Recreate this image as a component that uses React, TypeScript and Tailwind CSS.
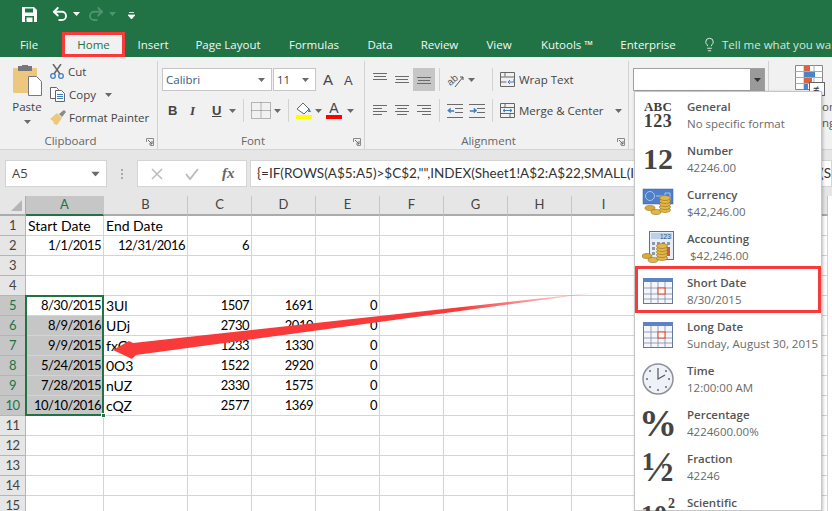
import { Lightbulb, Redo2, Undo2 } from "lucide-react";
import type { ReactNode } from "react";

const tabs = [
  { label: "File", w: "w-[58px]" },
  { label: "Home", w: "w-[63px]", active: true },
  { label: "Insert", w: "w-[56px]" },
  { label: "Page Layout", w: "w-[94px]" },
  { label: "Formulas", w: "w-[78px]" },
  { label: "Data", w: "w-[54px]" },
  { label: "Review", w: "w-[65px]" },
  { label: "View", w: "w-[54px]" },
  { label: "Kutools ™", w: "w-[82px]" },
  { label: "Enterprise", w: "w-[80px]" },
];

const columns = ["A", "B", "C", "D", "E", "F", "G", "H", "I", "J", "K", "L"];

// row number -> cells A..E, a leading "<" means left aligned
const sheet: Record<number, string[]> = {
  1: ["<Start Date", "<End Date", "", "", ""],
  2: ["1/1/2015", "12/31/2016", "6", "", ""],
  5: ["8/30/2015", "<3Ul", "1507", "1691", "0"],
  6: ["8/9/2016", "<UDj", "2730", "2010", "0"],
  7: ["9/9/2015", "<fxG", "1233", "1330", "0"],
  8: ["5/24/2015", "<0O3", "1522", "2920", "0"],
  9: ["7/28/2015", "<nUZ", "2330", "1575", "0"],
  10: ["10/10/2016", "<cQZ", "2577", "1369", "0"],
};

function Caret({ className = "" }: { className?: string }) {
  return (
    <svg width="7" height="4" viewBox="0 0 7 4" className={className}>
      <path d="M0 0h7L3.5 4z" fill="#6a6a6a" />
    </svg>
  );
}

function Divider({ className = "" }: { className?: string }) {
  return <div className={`w-px h-[23px] bg-[#d2d2d2] ${className}`} />;
}

function AlignLines({ kind }: { kind: "top" | "middle" | "bottom" | "left" | "center" | "right" }) {
  const sets = {
    top: [[0, 14, 2], [1, 13, 5], [0, 14, 8]],
    middle: [[0, 14, 5], [1, 13, 8], [0, 14, 11]],
    bottom: [[0, 14, 9], [1, 13, 12], [0, 14, 15]],
    left: [[0, 14, 3], [0, 9, 6], [0, 14, 9], [0, 9, 12]],
    center: [[0, 14, 3], [2, 12, 6], [0, 14, 9], [2, 12, 12]],
    right: [[0, 14, 3], [5, 14, 6], [0, 14, 9], [5, 14, 12]],
  }[kind];
  return (
    <svg width="14" height="17" viewBox="0 0 14 17">
      {sets.map(([a, b, y], i) => (
        <path key={i} d={`M${a} ${y + 0.5}H${b}`} stroke="#6b6b6b" />
      ))}
    </svg>
  );
}

function Indent({ flip }: { flip?: boolean }) {
  return (
    <svg width="16" height="16" viewBox="0 0 16 16">
      <path d="M0 1.5h16M8 5.5h8M8 9.5h8M0 14.5h16" stroke="#6b6b6b" />
      <path
        d={flip ? "M1 7.5h4V5l3 2.5L5 10V8.5H1z" : "M7 7.5H3.500V5L0.500 7.500 3.500 10V8.500H7z"}
        fill="#3f7fbf"
        stroke="#3f7fbf"
        strokeWidth=".5"
      />
    </svg>
  );
}

function Group({ width, label, launcher, children }: { width: string; label: string; launcher?: boolean; children: ReactNode }) {
  return (
    <div className={`${width} shrink-0 h-[88px] mt-[4px] border-r border-[#d2d2d2] flex flex-col relative`}>
      <div className="h-[61px] pt-[7px]">{children}</div>
      <div className="h-[14px] mt-[12px] pr-[16px] flex items-center justify-center leading-[14px] text-[#666]">{label}</div>
      {launcher && (
        <svg width="8" height="8" viewBox="0 0 8 8" className="absolute right-[3px] bottom-[3px]">
          <path d="M.5 4V.5H7.500V7.500H4" fill="none" stroke="#8a8a8a" />
          <path d="M2 2l4 4M6 3v3H3" fill="none" stroke="#6a6a6a" />
        </svg>
      )}
    </div>
  );
}

function Coins({ x = 0, y = 0 }: { x?: number; y?: number }) {
  const stacks = [
    [16, 13], [16, 10], [16, 7], [16, 4], [16, 1],
  ];
  return (
    <g transform={`translate(${x} ${y})`}>
      <ellipse cx="5" cy="11" rx="5" ry="2.500" fill="#d9a93a" stroke="#96711a" strokeWidth=".6" />
      <ellipse cx="11" cy="15" rx="5" ry="2.500" fill="#e2b64a" stroke="#96711a" strokeWidth=".6" />
      {stacks.map(([cx, cy], i) => (
        <ellipse key={i} cx={cx + 4} cy={cy} rx="5.500" ry="2.500" fill="#e2b64a" stroke="#96711a" strokeWidth=".6" />
      ))}
    </g>
  );
}

function CalendarIcon() {
  return (
    <svg width="30" height="27" viewBox="0 0 30 27">
      <rect x=".5" y=".5" width="29" height="25" fill="#f4f6fb" stroke="#66789a" />
      <rect x="0" y="0" width="30" height="4" fill="#5c83c4" />
      <path d="M.5 10h29M.5 16h29M.5 21h29M8 4v22M15 4v22M22 4v22" stroke="#7d8aa5" strokeWidth=".8" />
      <rect x="15" y="10" width="7" height="6" fill="#fff" stroke="#e2421f" />
    </svg>
  );
}

function MenuIcon({ kind }: { kind: string }) {
  if (kind === "General") {
    return (
      <div className="flex flex-col items-center text-[#3f3f3f] font-['Liberation_Serif',serif] font-bold">
        <span className="text-[13px] leading-[13px] tracking-[0.2px]">ABC</span>
        <span className="text-[18px] leading-[17px] tracking-[0.5px]">123</span>
      </div>
    );
  }
  if (kind === "Number") {
    return <span className="text-[30px] leading-[30px] text-[#444] font-bold font-['Liberation_Serif',serif]">12</span>;
  }
  if (kind === "Currency") {
    return (
      <svg width="32" height="30" viewBox="0 0 32 30">
        <rect x="1" y="1" width="30" height="15" fill="#4f7fc9" stroke="#3a5f9e" strokeWidth=".5" />
        <circle cx="8" cy="8" r="4.500" fill="none" stroke="#a9c6ee" />
        <path d="M14 8h8M23 5h5v7h-5z" stroke="#a9c6ee" fill="none" />
        <Coins x="3" y="9" />
      </svg>
    );
  }
  if (kind === "Accounting") {
    return (
      <svg width="33" height="33" viewBox="0 0 33 33">
        <rect x="7.500" y=".5" width="24" height="28" fill="#e8eef7" stroke="#4f74ab" />
        <rect x="9" y="2" width="21" height="6" fill="#bcd0ec" />
        <text x="18" y="7.500" fontSize="6.500" fontFamily="Liberation Sans" fill="#30507f">123</text>
        <path d="M10 11h3v3h-3zM15 11h3v3h-3zM20 11h3v3h-3zM25 11h3v3h-3zM10 16h3v3h-3zM10 21h3v3h-3z" fill="#8d99a8" />
        <rect x="25" y="16" width="3" height="9" fill="#c4603c" />
        <Coins x="0" y="14" />
      </svg>
    );
  }
  if (kind === "Short Date" || kind === "Long Date") return <CalendarIcon />;
  if (kind === "Time") {
    return (
      <svg width="32" height="32" viewBox="0 0 32 32">
        <circle cx="16" cy="16" r="15" fill="#eef2f8" stroke="#8c9199" strokeWidth="1.500" />
        <path d="M16 5v11l7-4" fill="none" stroke="#555" strokeWidth="1.200" />
        {[[16, 27], [27, 16], [5, 16], [24, 24], [8, 24], [8, 8], [24, 8]].map(([cx, cy], i) => (
          <circle key={i} cx={cx} cy={cy} r="1" fill="#666" />
        ))}
      </svg>
    );
  }
  if (kind === "Percentage") {
    return <span className="text-[38px] leading-[34px] text-[#444] font-bold font-['Liberation_Serif',serif]">%</span>;
  }
  if (kind === "Fraction") {
    return <span className="text-[42px] leading-[36px] text-[#444] font-bold font-['Liberation_Serif',serif]">½</span>;
  }
  return (
    <span className="text-[26px] leading-[30px] mt-[8px] text-[#444] font-bold font-['Liberation_Serif',serif] relative pr-[8px]">
      10
      <span className="absolute right-0 -top-[3px] text-[14px] leading-[14px]">2</span>
    </span>
  );
}

const menu = [
  { title: "General", sub: "No specific format" },
  { title: "Number", sub: "42246.00" },
  { title: "Currency", sub: "$42,246.00" },
  { title: "Accounting", sub: "\u00a0$42,246.00" },
  { title: "Short Date", sub: "8/30/2015" },
  { title: "Long Date", sub: "Sunday, August 30, 2015" },
  { title: "Time", sub: "12:00:00 AM" },
  { title: "Percentage", sub: "4224600.00%" },
  { title: "Fraction", sub: "42246" },
  { title: "Scientific", sub: "\u00a0" },
];

export default function App() {
  return (
    <div className="relative w-[832px] h-[511px] overflow-hidden bg-white font-['Open_Sans',sans-serif]">
      {/* Title bar */}
      <div className="h-[32px] bg-[#217346] flex items-center pl-[22px]">
        <svg width="15" height="15" viewBox="0 0 15 15" className="mb-[4px]">
          <path d="M0 0h12l3 3v12H0z" fill="#fff" />
          <path d="M3 1.500h8v4H3z" fill="#217346" />
          <path d="M3 9h9v6H3z" fill="#217346" />
          <path d="M4.500 10.500h6v4.500h-6z" fill="#fff" />
        </svg>
        <Undo2 size={18} strokeWidth={2.5} color="#fff" className="ml-[14px] mb-[5px]" />
        <Caret className="ml-[4px] mb-[4px] [&>path]:fill-white" />
        <Redo2 size={18} strokeWidth={2.5} color="#4f9470" className="ml-[7px] mb-[5px]" />
        <Caret className="ml-[4px] mb-[4px] [&>path]:fill-[#4f9470]" />
        <svg width="7" height="8" viewBox="0 0 7 8" className="ml-[12px] mb-[0px]">
          <path d="M1 .5h5M0 3h7L3.500 7z" stroke="#fff" fill="#fff" strokeWidth=".8" />
        </svg>
      </div>

      {/* Tabs */}
      <div className="h-[25px] bg-[#217346] flex items-center text-[11.5px] text-white">
        {tabs.map((t) => (
          <div
            key={t.label}
            className={`${t.w} h-[25px] shrink-0 flex items-center justify-center ${
              t.active ? "bg-[#f1f1f1] text-[#217346] border-[3px] border-[#f93a3a] ml-[4px]" : "opacity-95"
            }`}
          >
            {t.label}
          </div>
        ))}
        <Lightbulb size={15} strokeWidth={1.5} className="ml-[14px] shrink-0 text-[#e3efe8]" />
        <span className="ml-[5px] whitespace-nowrap text-[#d5e6dc]">Tell me what you want</span>
      </div>

      {/* Ribbon */}
      <div className="h-[93px] bg-[#f1f1f1] border-b border-[#d4d4d4] flex text-[11.5px] text-[#444]">
        <Group width="w-[158px]" label="Clipboard" launcher>
          <div className="flex h-[61px]">
            <div className="w-[50px] -mt-[3px] flex flex-col items-center pl-[4px]">
              <svg width="29" height="31" viewBox="0 0 29 31">
                <rect x="0" y="3" width="24" height="25" rx="1" fill="#eec77f" />
                <rect x="5" y="1" width="14" height="5" fill="#777" />
                <rect x="9" y="0" width="6" height="3" fill="#777" />
                <path d="M15.500 11.500h8l5 5v14h-13z" fill="#fff" stroke="#777" />
              </svg>
              <span className="mt-[3px] leading-[16px]">Paste</span>
              <Caret className="mt-[5px]" />
            </div>
            <div className="-mt-[8px] flex flex-col">
              <div className="h-[23px] flex items-center">
                <svg width="14" height="15" viewBox="0 0 14 15">
                  <path d="M3 0l7 10M11 0L4 10" stroke="#666" strokeWidth="1.500" />
                  <circle cx="3" cy="12" r="2.300" fill="none" stroke="#3f7fbf" strokeWidth="1.300" />
                  <circle cx="11" cy="12" r="2.300" fill="none" stroke="#3f7fbf" strokeWidth="1.300" />
                </svg>
                <span className="ml-[4px]">Cut</span>
              </div>
              <div className="h-[23px] flex items-center">
                <svg width="15" height="15" viewBox="0 0 15 15">
                  <path d="M.5.5h6l2 2v9H.5z" fill="#fff" stroke="#666" />
                  <path d="M5.500 3.500h6l3 3v8h-9z" fill="#fff" stroke="#666" />
                  <path d="M7 7.500h6M7 9.500h6M7 11.500h6" stroke="#3f7fbf" />
                </svg>
                <span className="ml-[4px]">Copy</span>
                <Caret className="ml-[9px]" />
              </div>
              <div className="h-[23px] flex items-center">
                <svg width="16" height="15" viewBox="0 0 16 15">
                  <path d="M0 9l7-6 5 5-5 7-3-1-1-3z" fill="#eec77f" />
                  <path d="M9 4l5-4 2 2-4 5z" fill="#8a8a8a" />
                </svg>
                <span className="ml-[3px] whitespace-nowrap">Format Painter</span>
              </div>
            </div>
          </div>
        </Group>

        <Group width="w-[207px]" label="Font" launcher>
          <div className="pl-[4px] flex h-[23px]">
            <div className="w-[110px] h-[23px] bg-white border border-[#c6c6c6] flex items-center justify-between px-[3px] pr-[6px]">
              <span className="text-[#3c5a82]">Calibri</span>
              <Caret />
            </div>
            <div className="w-[43px] h-[23px] ml-px bg-white border border-[#c6c6c6] flex items-center justify-between px-[3px] pr-[6px]">
              <span>11</span>
              <Caret />
            </div>
            <span className="ml-[7px] text-[15px] leading-[23px] font-['Liberation_Sans',sans-serif]">A</span>
            <span className="ml-[11px] text-[13px] leading-[25px] font-['Liberation_Sans',sans-serif]">A</span>
          </div>
          <div className="flex items-center h-[23px] mt-[8px] pl-[10px]">
            <span className="w-[22px] font-bold text-[13px] font-['Liberation_Sans',sans-serif]">B</span>
            <span className="w-[22px] italic text-[13px] font-['Liberation_Serif',serif] font-bold">I</span>
            <span className="w-[14px] underline font-bold text-[13px] font-['Liberation_Sans',sans-serif]">U</span>
            <Caret className="ml-[3px]" />
            <Divider className="ml-[7px]" />
            <svg width="20" height="17" viewBox="0 0 20 17" className="ml-[7px]">
              <path d="M.5.5h19v16H.5zM.5 8.500h19M10 .5v16" fill="none" stroke="#777" strokeDasharray="1 1" />
            </svg>
            <Caret className="ml-[3px]" />
            <Divider className="ml-[7px]" />
            <div className="ml-[7px] flex flex-col items-center">
              <svg width="16" height="13" viewBox="0 0 16 13">
                <path d="M1 7l6-6 6 6-5 5z" fill="#fff" stroke="#666" />
                <path d="M13 6l2 4h-3z" fill="#3f7fbf" />
              </svg>
              <div className="w-[16px] h-[4px] bg-[#ffff00]" />
            </div>
            <Caret className="ml-[3px]" />
            <div className="ml-[4px] flex flex-col items-center">
              <span className="text-[14px] leading-[13px] font-['Liberation_Sans',sans-serif]">A</span>
              <div className="w-[16px] h-[4px] bg-[#ff0000]" />
            </div>
            <Caret className="ml-[5px]" />
          </div>
        </Group>

        <Group width="w-[264px]" label="Alignment" launcher>
          <div className="flex items-center h-[23px] pl-[8px]">
            <AlignLines kind="top" />
            <div className="ml-[8px]"><AlignLines kind="middle" /></div>
            <div className="ml-[4px] w-[22px] h-[23px] bg-[#c6c6c6] flex justify-center"><AlignLines kind="bottom" /></div>
            <Divider className="ml-[4px]" />
            <svg width="17" height="16" viewBox="0 0 17 16" className="ml-[7px]">
              <text x="0" y="11" fontSize="10" fontFamily="Liberation Sans" fill="#555" transform="rotate(-40 6 8)">ab</text>
              <path d="M8 15L16 5M13 5h3v3" fill="none" stroke="#555" />
            </svg>
            <Caret className="ml-[4px]" />
            <Divider className="ml-[17px]" />
            <svg width="15" height="15" viewBox="0 0 15 15" className="ml-[7px]">
              <path d="M.5.5h14v14H.5z" fill="none" stroke="#666" />
              <path d="M.5 5h14M.5 10h6M5 .5v4" stroke="#666" />
              <path d="M14 7v3H8M10 8l-2 2 2 2" fill="none" stroke="#3f7fbf" />
            </svg>
            <span className="ml-[4px] whitespace-nowrap">Wrap Text</span>
          </div>
          <div className="flex items-center h-[23px] mt-[8px] pl-[8px]">
            <AlignLines kind="left" />
            <div className="ml-[8px]"><AlignLines kind="center" /></div>
            <div className="ml-[8px]"><AlignLines kind="right" /></div>
            <Divider className="ml-[8px]" />
            <div className="ml-[7px]"><Indent /></div>
            <div className="ml-[6px]"><Indent flip /></div>
            <Divider className="ml-[7px]" />
            <svg width="15" height="15" viewBox="0 0 15 15" className="ml-[7px]">
              <path d="M.5.5h14v14H.5zM.5 4.500h14M.5 10.500h14M5 .5v4M10 10.500v4" fill="none" stroke="#666" />
              <path d="M3 7.500h9M5 6l-2 1.500L5 9M10 6l2 1.500L10 9" fill="none" stroke="#3f7fbf" />
            </svg>
            <span className="ml-[4px] whitespace-nowrap">Merge &amp; Center</span>
            <Caret className="ml-[11px]" />
          </div>
        </Group>

        <Group width="w-[140px]" label="">
          <div className="pl-[4px]">
            <div className="w-[132px] h-[23px] bg-white border border-[#a0a0a0] flex justify-end">
              <div className="w-[14px] bg-[#9a9a9a] flex items-center justify-center"><Caret className="[&>path]:fill-[#333]" /></div>
            </div>
          </div>
        </Group>

        <div className="pl-[26px] pt-[8px] relative">
          <svg width="30" height="32" viewBox="0 0 30 32">
            <path d="M.5.5h27v24H.5z" fill="#fff" stroke="#888" />
            <path d="M9 .5v24M19 .5v24M.5 6.500h27M.5 12.500h27M.5 18.500h27" stroke="#aaa" />
            <path d="M9 1h6v5H9zM9 13h8v5H9z" fill="#d9633c" />
            <path d="M9 7h11v5H9zM9 19h4v6H9z" fill="#4a84c4" />
            <rect x="14.500" y="17.500" width="15" height="13" fill="#fff" stroke="#666" />
            <text x="18" y="28" fontSize="11" fontFamily="Liberation Sans" fill="#333">≠</text>
          </svg>
          <div className="absolute left-[53px] top-[42px] text-[#555] leading-[16px]">on<br />ng</div>
        </div>
      </div>

      {/* Formula bar */}
      <div className="h-[46px] bg-[#e6e6e6] pt-[10px] flex items-start text-[#444]">
        <div className="ml-[5px] w-[102px] h-[27px] bg-white border border-[#d4d4d4] flex items-center justify-between pl-[6px] pr-[7px] text-[13px]">
          <span>A5</span>
          <Caret className="scale-125" />
        </div>
        <div className="w-[30px] h-[27px] flex flex-col items-center justify-center gap-[2px]">
          <div className="w-[2px] h-[2px] bg-[#aaa]" />
          <div className="w-[2px] h-[2px] bg-[#aaa]" />
          <div className="w-[2px] h-[2px] bg-[#aaa]" />
        </div>
        <div className="w-[110px] h-[27px] bg-white border border-[#d4d4d4] flex items-center pl-[13px]">
          <svg width="12" height="12" viewBox="0 0 12 12"><path d="M1 1l10 10M11 1L1 11" stroke="#bdbdbd" strokeWidth="1.500" /></svg>
          <svg width="14" height="12" viewBox="0 0 14 12" className="ml-[22px]"><path d="M1 6l4 5 8-10" fill="none" stroke="#bdbdbd" strokeWidth="2" /></svg>
          <span className="ml-[23px] text-[15px] italic font-bold text-[#666] font-['Liberation_Serif',serif]">fx</span>
        </div>
        <div className="ml-[3px] flex-1 min-w-0 h-[27px] bg-white border border-[#d4d4d4] flex items-center justify-between pl-[6px] text-[13.5px] font-['Lato',sans-serif] text-[#333] whitespace-nowrap">
          <span>{'{=IF(ROWS(A$5:A5)>$C$2,"",INDEX(Sheet1!A$2:A$22,SMALL(I'}</span>
          <div className="w-[10px] overflow-hidden flex justify-end">F(S</div>
        </div>
      </div>

      {/* Sheet grid */}
      <div className="grid grid-cols-[26px_78px_84px_64px_64px_64px_64px_64px_64px_64px_64px_64px_64px] auto-rows-[20px] text-[14px] font-['Lato',sans-serif] text-black">
        <div className="bg-[#e6e6e6] border-r border-b-2 border-[#ababab] flex items-end justify-end pr-[3px] pb-[3px]">
          <svg width="11" height="11" viewBox="0 0 11 11"><path d="M11 0v11H0z" fill="#b5b5b5" /></svg>
        </div>
        {columns.map((c) => (
          <div
            key={c}
            className={`flex items-center justify-center text-[13px] border-r border-[#c6c6c6] border-b-2 ${
              c === "A" ? "bg-[#c6c6c6] text-[#217346] border-b-[#217346]" : "bg-[#e6e6e6] text-[#444] border-b-[#ababab]"
            }`}
          >
            {c}
          </div>
        ))}
        {Array.from({ length: 15 }, (_, i) => i + 1).map((n) => {
          const selected = n >= 5 && n <= 10;
          return [
            <div
              key={`h${n}`}
              className={`flex items-center justify-center text-[13px] tracking-[-0.5px] border-r border-b border-[#b5b5b5] ${
                selected ? "bg-[#c6c6c6] text-[#217346]" : "bg-[#e6e6e6] text-[#444]"
              }`}
            >
              {n}
            </div>,
            ...columns.map((_c, ci) => {
              const raw = sheet[n]?.[ci] ?? "";
              const left = raw.startsWith("<");
              return (
                <div
                  key={`${n}-${ci}`}
                  className={`flex items-center px-[2px] whitespace-nowrap border-r border-b border-[#d4d4d4] ${
                    left ? "justify-start" : "justify-end text-[13px] tracking-[-0.5px]"
                  } ${ci === 0 && n >= 6 && n <= 10 ? "bg-[#c6c6c6]" : ""}`}
                >
                  {left ? raw.slice(1) : raw}
                </div>
              );
            }),
          ];
        })}
      </div>

      {/* Selection outline over A5:A10 */}
      <div className="absolute left-[25px] top-[295px] w-[79px] h-[121px] border-2 border-[#217346]" />
      <div className="absolute left-[101px] top-[413px] w-[5px] h-[5px] bg-[#217346] border border-white" />

      {/* Annotation arrow */}
      <svg width="832" height="511" viewBox="0 0 832 511" className="absolute left-0 top-0 pointer-events-none">
        <defs>
          <linearGradient id="arrowFade" gradientUnits="userSpaceOnUse" x1="113" y1="0" x2="608" y2="0">
            <stop offset="0.7" stopColor="#f93a3a" />
            <stop offset="1" stopColor="#f93a3a" stopOpacity="0" />
          </linearGradient>
        </defs>
        <path d="M113 350L129 341L133 343L608 291L136 355L132 359Z" fill="url(#arrowFade)" />
      </svg>

      {/* Number format dropdown */}
      <div className="absolute left-[634px] top-[91px] w-[188px] h-[420px] bg-white border border-[#c6c6c6] shadow-[1px_1px_3px_rgba(0,0,0,0.25)] pt-[1px]">
        {menu.map((m) => (
          <div key={m.title} className="h-[44px] flex items-center">
            <div className="w-[44px] ml-[1px] shrink-0 flex justify-center">
              <MenuIcon kind={m.title} />
            </div>
            <div className="ml-[7px] flex flex-col text-[11.5px] leading-[17px] whitespace-nowrap">
              <span className="font-semibold text-[#555]">{m.title}</span>
              <span className="text-[#6a6a6a]">{m.sub}</span>
            </div>
          </div>
        ))}
      </div>
      <div className="absolute left-[635px] top-[266px] w-[186px] h-[47px] border-[3px] border-[#f93a3a]" />
    </div>
  );
}
